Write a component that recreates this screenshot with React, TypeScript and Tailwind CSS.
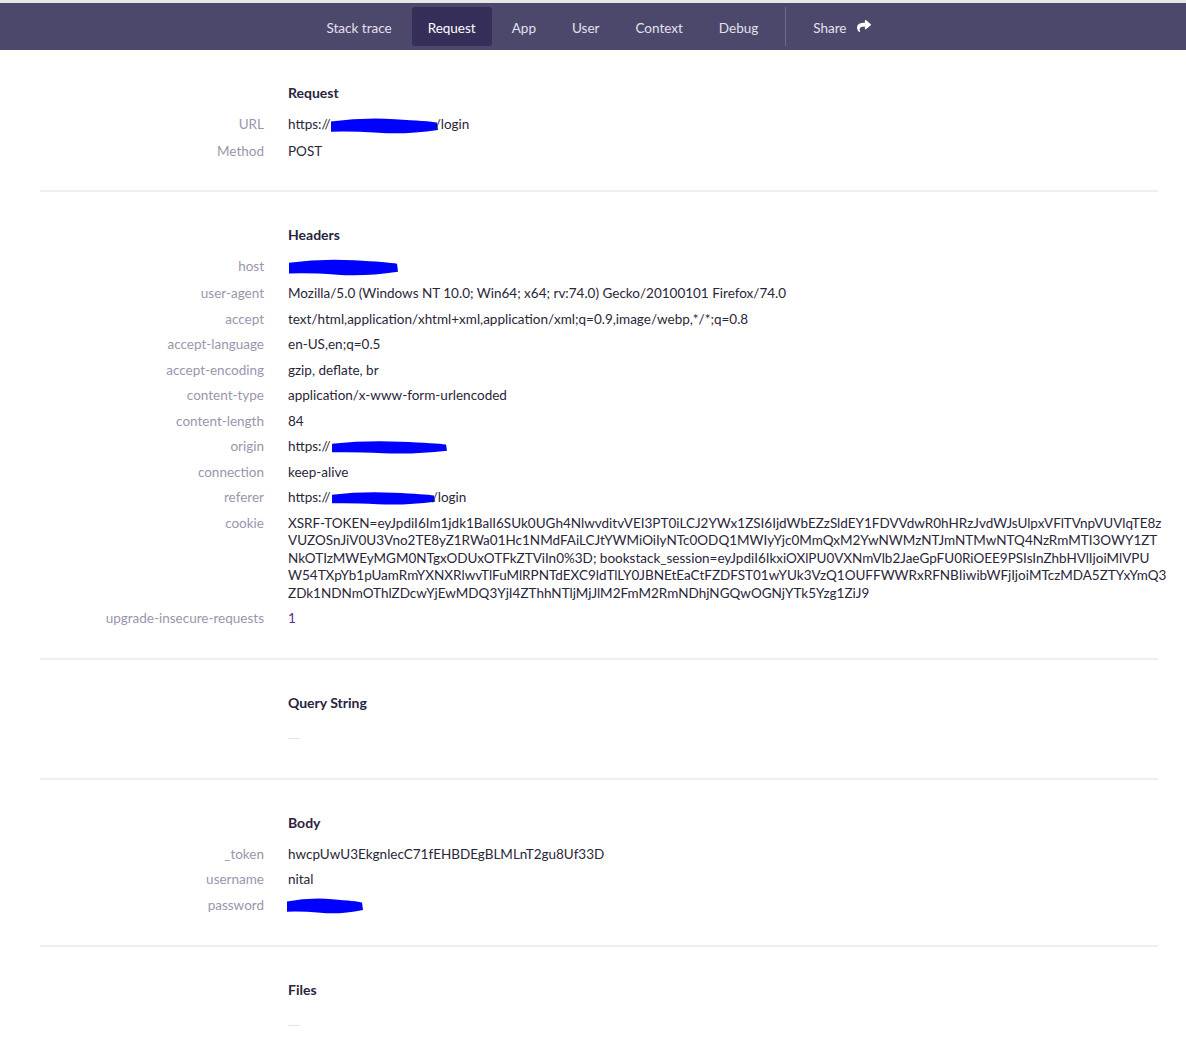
import { FaShare } from "react-icons/fa";

type Row = { label: string; value: React.ReactNode };

const TABS = ["Stack trace", "Request", "App", "User", "Context", "Debug"];

function Scribble({ w, h, className = "" }: { w: number; h: number; className?: string }) {
  // hand-drawn redaction blob
  return (
    <svg
      width={w}
      height={h}
      viewBox={`0 0 ${w} ${h}`}
      className={`inline-block align-middle ${className}`}
    >
      <path
        d={`M2 ${h * 0.25} Q${w * 0.3} ${h * 0.02} ${w * 0.6} ${h * 0.12} T${w - 2} ${h * 0.3} L${w - 1} ${h * 0.72} Q${w * 0.7} ${h * 0.98} ${w * 0.45} ${h * 0.88} T2 ${h * 0.82} Z`}
        fill="#0000ff"
      />
    </svg>
  );
}

const COOKIE = [
  "XSRF-TOKEN=eyJpdiI6Im1jdk1BalI6SUk0UGh4NlwvditvVEI3PT0iLCJ2YWx1ZSI6IjdWbEZzSldEY1FDVVdwR0hHRzJvdWJsUlpxVFlTVnpVUVlqTE8z",
  "VUZOSnJiV0U3Vno2TE8yZ1RWa01Hc1NMdFAiLCJtYWMiOiIyNTc0ODQ1MWIyYjc0MmQxM2YwNWMzNTJmNTMwNTQ4NzRmMTI3OWY1ZT",
  "NkOTIzMWEyMGM0NTgxODUxOTFkZTViIn0%3D; bookstack_session=eyJpdiI6IkxiOXlPU0VXNmVlb2JaeGpFU0RiOEE9PSIsInZhbHVlIjoiMlVPU",
  "W54TXpYb1pUamRmYXNXRlwvTlFuMlRPNTdEXC9ldTlLY0JBNEtEaCtFZDFST01wYUk3VzQ1OUFFWWRxRFNBIiwibWFjIjoiMTczMDA5ZTYxYmQ3",
  "ZDk1NDNmOThlZDcwYjEwMDQ3YjI4ZThhNTljMjJlM2FmM2RmNDhjNGQwOGNjYTk5Yzg1ZiJ9",
];

const REQUEST: Row[] = [
  {
    label: "URL",
    value: (
      <span>
        https://
        <Scribble w={110} h={18} className="-ml-[2px] -mr-[4px]" />
        /login
      </span>
    ),
  },
  { label: "Method", value: "POST" },
];

const HEADERS: Row[] = [
  { label: "host", value: <Scribble w={112} h={19} className="-ml-[1px]" /> },
  {
    label: "user-agent",
    value: "Mozilla/5.0 (Windows NT 10.0; Win64; x64; rv:74.0) Gecko/20100101 Firefox/74.0",
  },
  {
    label: "accept",
    value: "text/html,application/xhtml+xml,application/xml;q=0.9,image/webp,*/*;q=0.8",
  },
  { label: "accept-language", value: "en-US,en;q=0.5" },
  { label: "accept-encoding", value: "gzip, deflate, br" },
  { label: "content-type", value: "application/x-www-form-urlencoded" },
  { label: "content-length", value: "84" },
  {
    label: "origin",
    value: (
      <span>
        https://
        <Scribble w={118} h={15} className="-ml-[1px]" />
      </span>
    ),
  },
  { label: "connection", value: "keep-alive" },
  {
    label: "referer",
    value: (
      <span>
        https://
        <Scribble w={106} h={15} className="-ml-[1px] -mr-[4px]" />
        /login
      </span>
    ),
  },
  {
    label: "cookie",
    value: (
      <span className="block">
        {COOKIE.map((line) => (
          <span key={line} className="block whitespace-nowrap">
            {line}
          </span>
        ))}
      </span>
    ),
  },
  { label: "upgrade-insecure-requests", value: <span className="text-[#5b2a8e]">1</span> },
];

const BODY: Row[] = [
  { label: "_token", value: "hwcpUwU3EkgnlecC71fEHBDEgBLMLnT2gu8Uf33D" },
  { label: "username", value: "nital" },
  { label: "password", value: <Scribble w={79} h={18} className="-ml-[3px]" /> },
];

function Section({ title, rows, last }: { title: string; rows?: Row[]; last?: boolean }) {
  return (
    <section
      className={`pt-[33px] ${last ? "pb-6" : "pb-[26px] border-b-2 border-[#eeedf3]"}`}
    >
      <div className="grid grid-cols-[224px_1fr] gap-x-6">
        <div />
        <h2 className="font-bold text-[14px] text-[#2a2440] leading-5 mb-[9px]">{title}</h2>
      </div>
      {rows ? (
        <dl className="grid grid-cols-[224px_1fr] gap-x-6">
          {rows.map((r) => (
            <div key={r.label} className="contents">
              <dt className="text-right text-[#9b95ad] py-1 leading-[17.5px] whitespace-nowrap">
                {r.label}
              </dt>
              <dd className="text-[#2a2638] py-1 leading-[17.5px] break-all">{r.value}</dd>
            </div>
          ))}
        </dl>
      ) : (
        <div className="grid grid-cols-[224px_1fr] gap-x-6 pt-[10px] pb-[13px]">
          <div />
          <div className="w-3 h-px bg-[#e4e2ea] mt-[6px]" />
        </div>
      )}
    </section>
  );
}

export default function App() {
  return (
    <div className="min-h-screen bg-white text-[13.5px] font-['Lato','Noto_Sans',sans-serif]">
      <div className="h-[3px] bg-[#e7e7ea]" />
      <nav className="h-[47px] bg-[#4c486b] flex items-center justify-center pl-[12px]">
        <ul className="flex items-center gap-1">
          {TABS.map((t) => (
            <li key={t}>
              <button
                type="button"
                className={`h-[39px] px-4 pt-[3px] rounded-[3px] text-[13.5px] ${
                  t === "Request" ? "bg-[#352e58] text-white" : "text-[#e3e1ec]"
                }`}
              >
                {t}
              </button>
            </li>
          ))}
          <li className="w-px h-[39px] bg-[#6e6a8a] mx-[7px]" />
          <li>
            <button
              type="button"
              className="h-[39px] px-4 pt-[3px] flex items-center gap-[11px] text-[#e3e1ec]"
            >
              Share
              <FaShare className="text-[14px] text-white -mt-[4px]" />
            </button>
          </li>
        </ul>
      </nav>
      <main className="pl-10 pr-7">
        <Section title="Request" rows={REQUEST} />
        <Section title="Headers" rows={HEADERS} />
        <Section title="Query String" />
        <Section title="Body" rows={BODY} />
        <Section title="Files" last />
      </main>
    </div>
  );
}
